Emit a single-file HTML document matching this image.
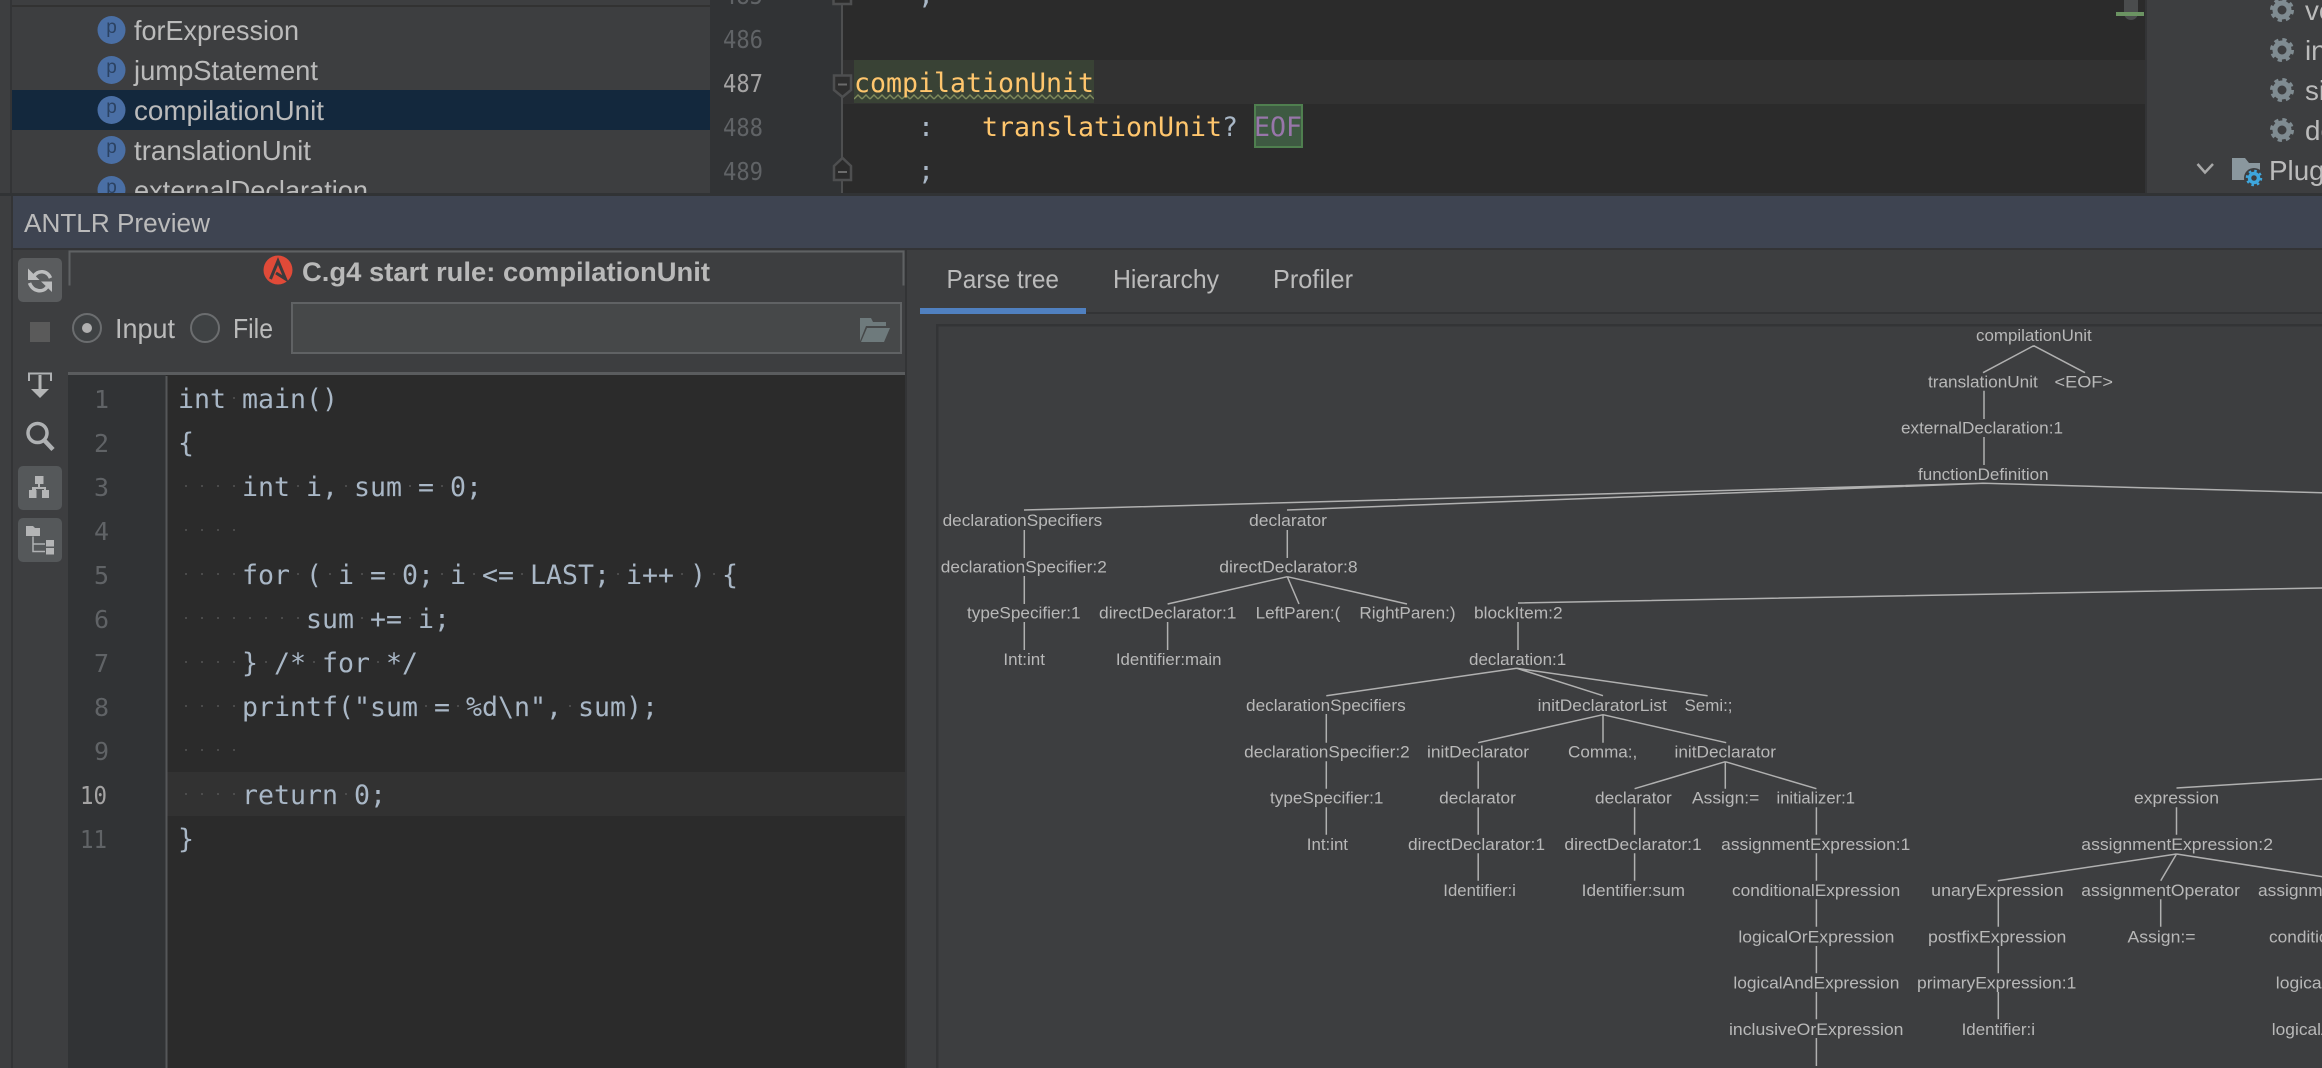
<!DOCTYPE html>
<html><head><meta charset="utf-8"><title>ANTLR Preview</title>
<style>
html,body{margin:0;padding:0;background:#3d3e40;width:2322px;height:1068px;overflow:hidden}
svg{display:block}
text{white-space:pre}
.s{font-family:"Liberation Sans",sans-serif;fill:#bbbbbb;font-size:27.8px}
.m{font-family:"DejaVu Sans Mono","Liberation Mono",monospace;font-size:26.58px;fill:#a9b7c6}
.y{fill:#ffc66d}
.n{font-family:"DejaVu Sans Mono","Liberation Mono",monospace;font-size:25px;fill:#606366}
.t{font-family:"Liberation Sans",sans-serif;font-size:17px;fill:#b8b8b8}
.l{stroke:#b0b0b0;stroke-width:1.5;fill:none}
.i{fill:#b4b5b6}
</style></head><body>
<svg xmlns="http://www.w3.org/2000/svg" width="2322" height="1068" viewBox="0 0 2322 1068">
<defs>
<pattern id="zz" x="854" y="94" width="8" height="6" patternUnits="userSpaceOnUse"><path d="M0 5L4 1L8 5" fill="none" stroke="#7f8a5c" stroke-width="1.400"/></pattern>
<g id="gear"><circle r="7" fill="none" stroke="#7f8b91" stroke-width="5"/><circle r="10.500" fill="none" stroke="#7f8b91" stroke-width="3" stroke-dasharray="4.250 4"/></g>
</defs>
<rect width="2322" height="1068" fill="#3d3e40"/>

<!-- structure panel -->
<rect x="12" y="5" width="698" height="2" fill="#323232"/>
<rect x="10" y="0" width="2" height="196" fill="#333436"/>
<rect x="12" y="90" width="698" height="40" fill="#13283d"/>
<g>
<circle cx="111.500" cy="30" r="14" fill="#4a6fa5"/><circle cx="111.500" cy="70" r="14" fill="#4a6fa5"/><circle cx="111.500" cy="110" r="14" fill="#4a6fa5"/><circle cx="111.500" cy="150" r="14" fill="#4a6fa5"/><circle cx="111.500" cy="190" r="14" fill="#4a6fa5"/>
<g font-family="Liberation Sans" font-size="19" fill="#2b4262" text-anchor="middle"><text x="111.500" y="33">p</text><text x="111.500" y="73">p</text><text x="111.500" y="113">p</text><text x="111.500" y="153">p</text><text x="111.500" y="193">p</text></g>
<text class="s" x="134" y="40" textLength="165" lengthAdjust="spacingAndGlyphs">forExpression</text>
<text class="s" x="134" y="80" textLength="184" lengthAdjust="spacingAndGlyphs">jumpStatement</text>
<text class="s" x="134" y="120" textLength="190" lengthAdjust="spacingAndGlyphs">compilationUnit</text>
<text class="s" x="134" y="160" textLength="177" lengthAdjust="spacingAndGlyphs">translationUnit</text>
<text class="s" x="134" y="200" textLength="234" lengthAdjust="spacingAndGlyphs">externalDeclaration</text>
</g>

<!-- main editor -->
<rect x="710" y="0" width="132" height="194" fill="#313335"/>
<rect x="842" y="0" width="1303" height="194" fill="#2b2b2b"/>
<rect x="842" y="60" width="1303" height="44" fill="#323232"/>
<rect x="854" y="60" width="240" height="43" fill="#394235"/>
<rect x="854" y="94" width="240" height="6" fill="url(#zz)"/>
<rect x="1255" y="105" width="47" height="42" fill="#3e5a42" stroke="#4f7f4f" stroke-width="2"/>
<rect x="841" y="0" width="2" height="194" fill="#4e4f50"/>
<path d="M833.500 -10H851V4H833.500Z" fill="#2b2b2b" stroke="#4e4f50" stroke-width="2.500"/>
<path d="M834 75.500H851V90L842.500 97L834 90Z" fill="#2e2e2e" stroke="#4e4f50" stroke-width="2.500"/>
<path d="M838 84.500H847" stroke="#6b6b6b" stroke-width="2"/>
<path d="M834 180H851V166L842.500 158L834 166Z" fill="#2b2b2b" stroke="#4e4f50" stroke-width="2.500"/>
<path d="M838 172H847" stroke="#6b6b6b" stroke-width="2"/>
<text class="n" x="723" y="4" textLength="40" lengthAdjust="spacingAndGlyphs">485</text>
<text class="n" x="723" y="48" textLength="40" lengthAdjust="spacingAndGlyphs">486</text>
<text class="n" x="723" y="92" textLength="40" lengthAdjust="spacingAndGlyphs" style="fill:#a4a3a3">487</text>
<text class="n" x="723" y="136" textLength="40" lengthAdjust="spacingAndGlyphs">488</text>
<text class="n" x="723" y="180" textLength="40" lengthAdjust="spacingAndGlyphs">489</text>
<text class="m" x="918" y="4">;</text>
<text class="m y" x="854" y="92">compilationUnit</text>
<text class="m" x="918" y="136">:</text>
<text class="m y" x="982" y="136">translationUnit</text>
<text class="m" x="1222" y="136">?</text>
<text class="m" x="1254" y="136" style="fill:#9876aa">EOF</text>
<text class="m" x="918" y="180">;</text>
<path d="M2124 0H2138V13A7 7 0 0 1 2124 13Z" fill="#4a4c4d"/>
<rect x="2116" y="12" width="28" height="4" fill="#6b9362"/>
<rect x="2145" y="0" width="2" height="194" fill="#333436"/>

<!-- right project panel -->
<use href="#gear" x="2282" y="10"/><use href="#gear" x="2282" y="50"/><use href="#gear" x="2282" y="90"/><use href="#gear" x="2282" y="130"/>
<text class="s" x="2305" y="20">ve</text><text class="s" x="2305" y="60">in</text><text class="s" x="2305" y="100">si</text><text class="s" x="2305" y="140">de</text>
<path d="M2197.500 164L2205 172.500L2213 164" fill="none" stroke="#a8a8a8" stroke-width="2.500"/>
<path d="M2232 158H2245L2249 163H2260V180H2232Z" fill="#8a979e"/>
<circle cx="2254" cy="178" r="10" fill="#3d3e40"/>
<circle cx="2254" cy="178" r="4.500" fill="none" stroke="#3ea6dc" stroke-width="3.500"/>
<circle cx="2254" cy="178" r="7" fill="none" stroke="#3ea6dc" stroke-width="2.500" stroke-dasharray="2.500 3"/>
<text class="s" x="2269" y="180">Plugins</text>

<!-- ANTLR header -->
<rect x="0" y="193" width="2322" height="3" fill="#313335"/>
<rect x="12" y="196" width="2310" height="52" fill="#3e4451"/>
<rect x="0" y="196" width="12" height="52" fill="#3d3e40"/>
<text class="s" x="24" y="232" textLength="186" lengthAdjust="spacingAndGlyphs" style="font-size:26.200px">ANTLR Preview</text>
<rect x="12" y="248" width="2310" height="2" fill="#333436"/>

<!-- left stripes -->
<rect x="11" y="196" width="2" height="872" fill="#333436"/>

<!-- toolbar -->
<rect x="18" y="258" width="44" height="44" rx="5" fill="#5a5c5e"/>
<g fill="none" stroke="#bcbdbe" stroke-width="3.500">
<path d="M34 276C38 270 47 270 50.500 278"/><path d="M29.500 283C33 292 43 293 47 287"/>
</g>
<path d="M28 268.500L28 280L39.500 280Z M52 292L52 281.500L41 281.500Z" fill="#bcbdbe"/>
<rect x="30" y="322" width="20" height="20" fill="#5a5a5a"/>
<path d="M29 381V373.500H51V381" fill="none" stroke="#afb1b3" stroke-width="2"/>
<path d="M38.500 375H41.500V389H49L40 398L31 389H38.500Z" class="i"/>
<circle cx="37.500" cy="433" r="9.500" fill="none" stroke="#afb1b3" stroke-width="3.500"/>
<path d="M44 440L53 449.500" stroke="#afb1b3" stroke-width="4.500"/>
<rect x="18" y="466" width="44" height="44" rx="5" fill="#55585a"/>
<path d="M35 476H43.500V484H40V487H46V490H49V498H42V490H44V489H36V490H36.500V498H29V490H32V487H38V484H35Z" class="i"/>
<rect x="18" y="518" width="44" height="44" rx="5" fill="#55585a"/>
<path d="M26 526H33L35 528H40V536H26Z" class="i"/>
<path d="M33 536.500V551.500H45M33 544H45" fill="none" stroke="#afb1b3" stroke-width="1.500"/>
<rect x="46" y="540" width="8" height="6.500" class="i"/><rect x="46" y="548" width="8" height="6.500" class="i"/>

<!-- title box -->
<path d="M69.500 285.500V251.500H903.500V285.500" fill="none" stroke="#5f6163" stroke-width="2"/>
<circle cx="278" cy="270" r="14.500" fill="#e04a38"/>
<path d="M270.500 279L278 261L285.500 279L276 273" fill="none" stroke="#3d3a3c" stroke-width="3"/>
<text x="302" y="281" textLength="408" lengthAdjust="spacingAndGlyphs" style="font-family:'Liberation Sans',sans-serif;font-weight:bold;font-size:27px;fill:#b9b9b9">C.g4 start rule: compilationUnit</text>

<!-- input row -->
<circle cx="87" cy="328" r="14" fill="#3f4244" stroke="#6b6d6f" stroke-width="2"/><circle cx="87" cy="328" r="5" fill="#b0b0b0"/>
<text class="s" x="115" y="338" textLength="60" lengthAdjust="spacingAndGlyphs">Input</text>
<circle cx="205" cy="328" r="14" fill="#3f4244" stroke="#6b6d6f" stroke-width="2"/>
<text class="s" x="233" y="338" textLength="40" lengthAdjust="spacingAndGlyphs">File</text>
<rect x="292" y="303" width="609" height="50" fill="#464849" stroke="#606264" stroke-width="2"/>
<path d="M860 318H871L873 322H886V326H866L860 341Z" fill="#6e7a7c"/>
<path d="M867 328H890L884 342H861Z" fill="#6e7a7c"/>

<!-- preview editor -->
<rect x="68" y="372" width="837" height="696" fill="#2b2b2b"/>
<rect x="68" y="372" width="837" height="3" fill="#5a5c5e"/>
<rect x="68" y="375" width="98" height="693" fill="#313335"/>
<rect x="166" y="772" width="739" height="44" fill="#323232"/>
<rect x="165.500" y="376" width="2" height="692" fill="#555759"/>
<g class="nums">
<text class="n" x="94" y="408">1</text><text class="n" x="94" y="452">2</text><text class="n" x="94" y="496">3</text><text class="n" x="94" y="540">4</text><text class="n" x="94" y="584">5</text><text class="n" x="94" y="628">6</text><text class="n" x="94" y="672">7</text><text class="n" x="94" y="716">8</text><text class="n" x="94" y="760">9</text>
<text class="n" x="80" y="804" style="fill:#a4a3a3" textLength="27" lengthAdjust="spacingAndGlyphs">10</text>
<text class="n" x="80" y="848" textLength="27" lengthAdjust="spacingAndGlyphs">11</text>
</g>
<path stroke="#555" stroke-width="2" stroke-linecap="round" fill="none" transform="translate(-1 0)" d="M235 398h.01
M187 486h.01M203 486h.01M219 486h.01M235 486h.01M299 486h.01M347 486h.01M411 486h.01M443 486h.01
M187 530h.01M203 530h.01M219 530h.01M235 530h.01
M187 574h.01M203 574h.01M219 574h.01M235 574h.01M299 574h.01M331 574h.01M363 574h.01M395 574h.01M443 574h.01M475 574h.01M523 574h.01M619 574h.01M683 574h.01M715 574h.01
M187 618h.01M203 618h.01M219 618h.01M235 618h.01M251 618h.01M267 618h.01M283 618h.01M299 618h.01M363 618h.01M411 618h.01
M187 662h.01M203 662h.01M219 662h.01M235 662h.01M267 662h.01M315 662h.01M379 662h.01
M187 706h.01M203 706h.01M219 706h.01M235 706h.01M427 706h.01M459 706h.01M571 706h.01
M187 750h.01M203 750h.01M219 750h.01M235 750h.01
M187 794h.01M203 794h.01M219 794h.01M235 794h.01M347 794h.01"/>
<text class="m" x="178" y="408">int main()</text>
<text class="m" x="178" y="452">{</text>
<text class="m" x="178" y="496">    int i, sum = 0;</text>
<text class="m" x="178" y="584">    for ( i = 0; i &lt;= LAST; i++ ) {</text>
<text class="m" x="178" y="628">        sum += i;</text>
<text class="m" x="178" y="672">    } /* for */</text>
<text class="m" x="178" y="716">    printf("sum = %d\n", sum);</text>
<text class="m" x="178" y="804">    return 0;</text>
<text class="m" x="178" y="848">}</text>

<!-- tabs -->
<rect x="905" y="250" width="2" height="818" fill="#333436"/>
<text class="s" x="946.500" y="288" textLength="112.500" lengthAdjust="spacingAndGlyphs" style="font-size:26px">Parse tree</text>
<text class="s" x="1113" y="288" textLength="106" lengthAdjust="spacingAndGlyphs" style="font-size:26px">Hierarchy</text>
<text class="s" x="1273" y="288" textLength="80" lengthAdjust="spacingAndGlyphs" style="font-size:26px">Profiler</text>
<rect x="1086" y="312" width="1236" height="2" fill="#333436"/>
<rect x="920" y="308" width="166" height="6" fill="#5080c0"/>

<!-- tree panel -->
<rect x="936" y="324" width="1386" height="2.500" fill="#333436"/>
<rect x="936" y="324" width="2.500" height="744" fill="#333436"/>

<!-- tree lines -->
<path class="l" d="M2033.700 345.700L1983 372.700M2033.700 345.700L2085 372.700M1984 390.700V419M1984 437V465
M1984 483.300L1024 510M1984 483.300L1287 510M1984 483.300L2322 492.700M1518 603L2322 588
M1024.300 530V558M1024.300 576V604M1024.300 622V650M1287.300 530V558
M1287.300 576.700L1167.600 604M1287.300 576.700L1299 604M1287.300 576.700L1407 604
M1167.600 622V650M1518 622V650
M1516.800 668.300L1326.300 695.700M1516.800 668.300L1603 695.700M1516.800 668.300L1707.600 695.700
M1326.300 714V742.700M1326.300 761.300V788.700M1326.300 807.300V834.700
M1603 714.700L1478.200 742.700M1603 714.700V742.700M1603 714.700L1726.200 742.700
M1478.200 761.300V788.700M1478.200 807.300V834.700M1478.200 853.300V880.700
M1725.300 761.700L1634.600 788.700M1725.300 761.700V788.700M1725.300 761.700L1816.400 788.700
M1634.600 807.300V834.700M1634.600 853.300V880.700
M1816.400 807.300V834.700M1816.400 853.300V880.700M1816.400 899.300V926.700M1816.400 946V973.300M1816.400 992V1019.300M1816.400 1038V1066
M2176.500 788L2322 779M2176.500 807.300V834.700
M2176.500 854L1997.800 880.700M2176.500 854L2160.700 880.700M2176.500 854L2350 881
M1998.300 899.300V926.700M1998.300 946V973.300M1998.300 992V1019.300M2160.700 899.300V926.700"/>

<!-- tree labels -->
<g class="labels" transform="translate(0 -1)">
<text class="t" x="1976" y="342" textLength="115.700" lengthAdjust="spacingAndGlyphs">compilationUnit</text>
<text class="t" x="1928" y="388.300" textLength="109.800" lengthAdjust="spacingAndGlyphs">translationUnit</text>
<text class="t" x="2054.500" y="388.300" textLength="58.500" lengthAdjust="spacingAndGlyphs">&lt;EOF&gt;</text>
<text class="t" x="1901" y="434.500" textLength="162" lengthAdjust="spacingAndGlyphs">externalDeclaration:1</text>
<text class="t" x="1918" y="480.800" textLength="130.600" lengthAdjust="spacingAndGlyphs">functionDefinition</text>
<text class="t" x="942.600" y="527" textLength="159.700" lengthAdjust="spacingAndGlyphs">declarationSpecifiers</text>
<text class="t" x="1249" y="527" textLength="78" lengthAdjust="spacingAndGlyphs">declarator</text>
<text class="t" x="940.800" y="573.300" textLength="166" lengthAdjust="spacingAndGlyphs">declarationSpecifier:2</text>
<text class="t" x="1219.300" y="573.300" textLength="138.300" lengthAdjust="spacingAndGlyphs">directDeclarator:8</text>
<text class="t" x="967" y="619.500" textLength="113.500" lengthAdjust="spacingAndGlyphs">typeSpecifier:1</text>
<text class="t" x="1099" y="619.500" textLength="137.500" lengthAdjust="spacingAndGlyphs">directDeclarator:1</text>
<text class="t" x="1255.600" y="619.500" textLength="84.800" lengthAdjust="spacingAndGlyphs">LeftParen:(</text>
<text class="t" x="1359.400" y="619.500" textLength="96.200" lengthAdjust="spacingAndGlyphs">RightParen:)</text>
<text class="t" x="1474" y="619.500" textLength="88.600" lengthAdjust="spacingAndGlyphs">blockItem:2</text>
<text class="t" x="1003.400" y="665.800" textLength="41.600" lengthAdjust="spacingAndGlyphs">Int:int</text>
<text class="t" x="1115.900" y="665.800" textLength="105.600" lengthAdjust="spacingAndGlyphs">Identifier:main</text>
<text class="t" x="1469" y="665.800" textLength="97.200" lengthAdjust="spacingAndGlyphs">declaration:1</text>
<text class="t" x="1246" y="712" textLength="159.700" lengthAdjust="spacingAndGlyphs">declarationSpecifiers</text>
<text class="t" x="1537.600" y="712" textLength="129.200" lengthAdjust="spacingAndGlyphs">initDeclaratorList</text>
<text class="t" x="1684.500" y="712" textLength="48" lengthAdjust="spacingAndGlyphs">Semi:;</text>
<text class="t" x="1244.200" y="758.300" textLength="165.500" lengthAdjust="spacingAndGlyphs">declarationSpecifier:2</text>
<text class="t" x="1427" y="758.300" textLength="102" lengthAdjust="spacingAndGlyphs">initDeclarator</text>
<text class="t" x="1568" y="758.300" textLength="69.300" lengthAdjust="spacingAndGlyphs">Comma:,</text>
<text class="t" x="1674.500" y="758.300" textLength="101.500" lengthAdjust="spacingAndGlyphs">initDeclarator</text>
<text class="t" x="1270" y="804.500" textLength="113.400" lengthAdjust="spacingAndGlyphs">typeSpecifier:1</text>
<text class="t" x="1439.200" y="804.500" textLength="76.700" lengthAdjust="spacingAndGlyphs">declarator</text>
<text class="t" x="1595" y="804.500" textLength="76.800" lengthAdjust="spacingAndGlyphs">declarator</text>
<text class="t" x="1692" y="804.500" textLength="67.300" lengthAdjust="spacingAndGlyphs">Assign:=</text>
<text class="t" x="1776.500" y="804.500" textLength="78.500" lengthAdjust="spacingAndGlyphs">initializer:1</text>
<text class="t" x="2134" y="804.500" textLength="85" lengthAdjust="spacingAndGlyphs">expression</text>
<text class="t" x="1306.800" y="850.800" textLength="41.200" lengthAdjust="spacingAndGlyphs">Int:int</text>
<text class="t" x="1408" y="850.800" textLength="137" lengthAdjust="spacingAndGlyphs">directDeclarator:1</text>
<text class="t" x="1564.400" y="850.800" textLength="137.300" lengthAdjust="spacingAndGlyphs">directDeclarator:1</text>
<text class="t" x="1721.200" y="850.800" textLength="189.100" lengthAdjust="spacingAndGlyphs">assignmentExpression:1</text>
<text class="t" x="2081.300" y="850.800" textLength="191.700" lengthAdjust="spacingAndGlyphs">assignmentExpression:2</text>
<text class="t" x="1443.300" y="897" textLength="72.600" lengthAdjust="spacingAndGlyphs">Identifier:i</text>
<text class="t" x="1581.700" y="897" textLength="103.300" lengthAdjust="spacingAndGlyphs">Identifier:sum</text>
<text class="t" x="1732" y="897" textLength="168.300" lengthAdjust="spacingAndGlyphs">conditionalExpression</text>
<text class="t" x="1931.200" y="897" textLength="132.400" lengthAdjust="spacingAndGlyphs">unaryExpression</text>
<text class="t" x="2081.300" y="897" textLength="158.700" lengthAdjust="spacingAndGlyphs">assignmentOperator</text>
<text class="t" x="2258" y="897" textLength="189" lengthAdjust="spacingAndGlyphs">assignmentExpression:1</text>
<text class="t" x="1738.400" y="943.300" textLength="156" lengthAdjust="spacingAndGlyphs">logicalOrExpression</text>
<text class="t" x="1928" y="943.300" textLength="138.300" lengthAdjust="spacingAndGlyphs">postfixExpression</text>
<text class="t" x="2127.500" y="943.300" textLength="68.100" lengthAdjust="spacingAndGlyphs">Assign:=</text>
<text class="t" x="2269" y="943.300" textLength="168" lengthAdjust="spacingAndGlyphs">conditionalExpression</text>
<text class="t" x="1733.400" y="989.500" textLength="166" lengthAdjust="spacingAndGlyphs">logicalAndExpression</text>
<text class="t" x="1917" y="989.500" textLength="159.300" lengthAdjust="spacingAndGlyphs">primaryExpression:1</text>
<text class="t" x="2275.800" y="989.500" textLength="156" lengthAdjust="spacingAndGlyphs">logicalOrExpression</text>
<text class="t" x="1729" y="1035.800" textLength="174.500" lengthAdjust="spacingAndGlyphs">inclusiveOrExpression</text>
<text class="t" x="1961.600" y="1035.800" textLength="73.400" lengthAdjust="spacingAndGlyphs">Identifier:i</text>
<text class="t" x="2271.800" y="1035.800" textLength="166" lengthAdjust="spacingAndGlyphs">logicalAndExpression</text>
</g>
</svg>
</body></html>
